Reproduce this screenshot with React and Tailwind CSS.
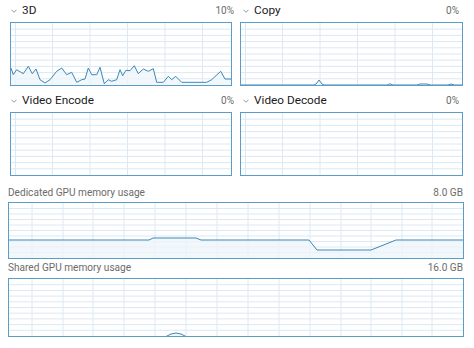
import React from "react";

const GRID = "#dce9f2";
const LINE = "#3d87b6";
const FILL = "#edf5fa";

function Grid({ w, h, vx, rows }) {
  const hs = [];
  for (let i = 1; i < rows; i++) hs.push((h * i) / rows);
  return (
    <g>
      {hs.map((y, i) => (
        <line key={"h" + i} x1={0} x2={w} y1={y} y2={y} stroke={GRID} strokeWidth={1} vectorEffect="non-scaling-stroke" />
      ))}
      {vx.map((x, i) => (
        <line key={"v" + i} x1={x} x2={x} y1={0} y2={h} stroke={GRID} strokeWidth={1} vectorEffect="non-scaling-stroke" />
      ))}
    </g>
  );
}

function Chart({ w, h, vx, rows, points, className }) {
  const d = points ? "M" + points.map((p) => p.join(",")).join(" L") : null;
  const area = points ? d + ` L${w},${h} L0,${h} Z` : null;
  return (
    <div className={"border border-[#5a9dc6] bg-white " + className}>
      <svg width="100%" height="100%" viewBox={`0 0 ${w} ${h}`} preserveAspectRatio="none" className="block">
        <Grid w={w} h={h} vx={vx} rows={rows} />
        {points && <path d={area} fill={FILL} fillOpacity={0.8} stroke="none" />}
        {points && <path d={d} fill="none" stroke={LINE} strokeWidth={1} vectorEffect="non-scaling-stroke" />}
      </svg>
    </div>
  );
}

const chevron = (
  <svg width="6" height="4" viewBox="0 0 6 4" className="block">
    <path d="M0.5 0.8 L3 3.3 L5.5 0.8" fill="none" stroke="#8a8a8a" strokeWidth="0.9" />
  </svg>
);

function Header({ title, pct, right }) {
  return (
    <div className={"flex h-[22px] items-center justify-between " + (right ? "pr-[4px]" : "-mr-[2px]")}>
      <div className="flex items-center">
        <span className={right ? "ml-[3px] mr-[5px]" : "ml-[1px] mr-[5px]"}>{chevron}</span>
        <span className="text-[11.8px] leading-none text-[#1b1b1b]">{title}</span>
      </div>
      <span className="text-[10px] leading-none text-[#6b6b6b]">{pct}</span>
    </div>
  );
}

const v3d = [4.5, 41.5, 79, 116.5, 154, 191.5];
const vMem = [23, 54, 84, 115, 146, 177, 208, 239, 270, 301, 332, 362, 393, 423];

const pts3d = [
  [0, 45], [2.3, 51.7], [5.7, 46.7], [12.3, 50.7], [17.3, 43.3], [21.3, 50.7], [25, 46], [29, 56.7],
  [34, 60], [39, 56.7], [45.7, 48.3], [50.7, 45], [55.7, 51.7], [60.7, 49.3], [65.7, 59.3], [70.7, 56.7],
  [74, 56], [77.3, 45], [80.7, 51.7], [85.7, 51.7], [89, 44.3], [93.3, 60.7], [97.3, 56.7], [100.7, 58.3],
  [105.7, 56.7], [109, 46.7], [111.7, 52.7], [115, 47.3], [119, 47.7], [123.3, 42.7], [127.3, 50.7],
  [132.3, 46], [137.3, 48.3], [142.3, 45.7], [145.7, 59.3], [152.3, 59.3], [157.3, 53.3], [160.7, 56.7],
  [164.7, 53.3], [170.7, 59.3], [195.7, 59.3], [200.7, 56.7], [209.7, 48.3], [214, 56], [220, 56],
];

const ptsCopy = [
  [0, 62], [73, 62], [75, 61], [78, 57], [81, 61], [83, 62], [146, 62], [149, 60.8], [152, 62],
  [176, 62], [179, 61], [186, 61], [189, 62], [207, 62], [210, 61], [213, 62], [221, 62],
];

const ptsDed = [
  [0, 37], [140, 37], [144, 35], [187, 35], [192, 37], [300, 37], [308, 47], [362, 47], [387, 37], [454, 37],
];

const ptsShared = [
  [0, 57.5], [157, 57.5], [162, 55], [167, 54], [172, 55], [177, 57.5], [454, 57.5],
];

export default function App() {
  return (
    <div className="w-[474px] h-[348px] bg-white overflow-hidden" style={{ fontFamily: 'Roboto, "Open Sans", sans-serif' }}>
      <div className="grid grid-cols-[222px_223px] gap-x-[8px] pl-[10px]">
        <div>
          <Header title="3D" pct="10%" />
          <Chart w={220} h={62} vx={v3d} rows={10} points={pts3d} className="h-[64px]" />
        </div>
        <div>
          <Header title="Copy" pct="0%" right />
          <Chart w={221} h={62} vx={v3d} rows={10} points={ptsCopy} className="h-[64px]" />
        </div>
        <div className="mt-[4px]">
          <Header title="Video Encode" pct="0%" />
          <Chart w={220} h={62} vx={v3d} rows={10} className="h-[64px]" />
        </div>
        <div className="mt-[4px]">
          <Header title="Video Decode" pct="0%" right />
          <Chart w={221} h={62} vx={v3d} rows={10} className="h-[64px]" />
        </div>
      </div>
      <div className="pl-[8px] w-[464px] mt-[8px]">
        <div className="flex h-[18px] items-center justify-between text-[10.1px] leading-none text-[#6b6b6b]">
          <span>Dedicated GPU memory usage</span>
          <span className="mr-[1px]">8.0 GB</span>
        </div>
        <Chart w={454} h={55} vx={vMem} rows={10} points={ptsDed} className="h-[57px]" />
        <div className="flex h-[19px] items-center justify-between text-[10.1px] leading-none text-[#6b6b6b]">
          <span>Shared GPU memory usage</span>
          <span className="mr-[1px]">16.0 GB</span>
        </div>
        <Chart w={454} h={57} vx={vMem} rows={10} points={ptsShared} className="h-[59px]" />
      </div>
    </div>
  );
}
